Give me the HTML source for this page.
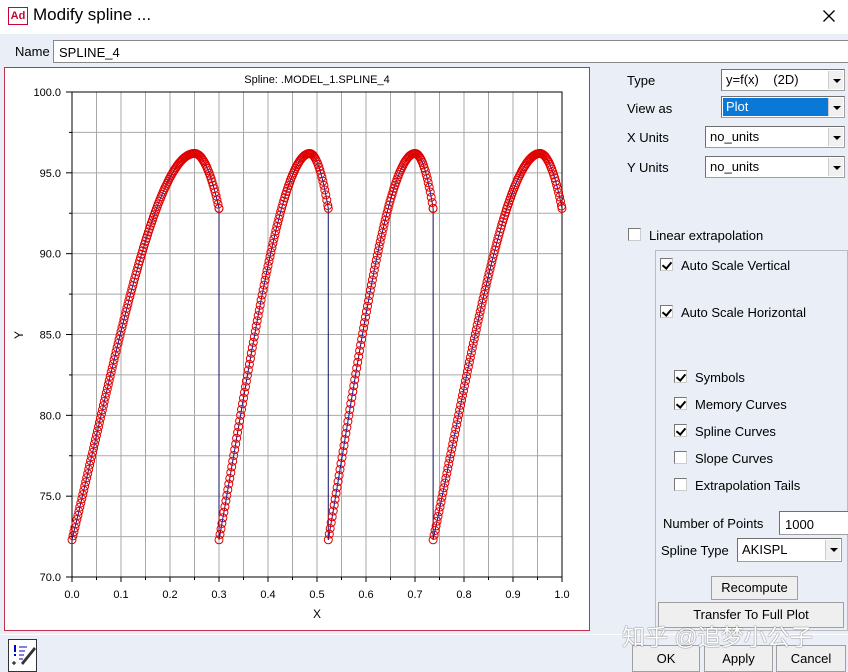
<!DOCTYPE html>
<html><head><meta charset="utf-8"><style>
*{box-sizing:border-box}
body{margin:0;width:848px;height:672px;background:#eaeff7;font-family:"Liberation Sans",Arial,sans-serif;font-size:13px;color:#000;position:relative;overflow:hidden}
.a{position:absolute}
.sel{position:absolute;background:#fff;border:1px solid #a0a0a0;border-top-color:#707070;border-left-color:#707070;font-size:13px;padding:2px 4px}
.sel .ar{position:absolute;right:1px;top:1px;bottom:1px;width:15px;background:#f0f0f0;border-left:1px solid #ccc}
.sel .ar:after{content:"";position:absolute;left:4px;top:8px;border-left:4px solid transparent;border-right:4px solid transparent;border-top:4px solid #000}
.cb{position:absolute;width:13px;height:13px;background:#fff;border:1px solid #777;border-right-color:#ccc;border-bottom-color:#ccc}
.cb.k:after{content:"";position:absolute;left:3px;top:1px;width:4px;height:7px;border:solid #000;border-width:0 2px 2px 0;transform:rotate(40deg)}
.btn{position:absolute;background:#efefef;border:1px solid #a0a0a0;text-align:center;font-size:13px}
</style></head><body>
<div class="a" style="left:0;top:0;width:848px;height:34px;background:#fff"></div>
<div class="a" style="left:8px;top:7px;width:20px;height:18px;border:1px solid #c03;color:#c03;font-weight:bold;font-size:11px;line-height:16px;text-align:center">Ad</div>
<div class="a" style="left:33px;top:5px;font-size:17px">Modify spline ...</div>
<svg class="a" style="left:823px;top:10px" width="12" height="12"><path d="M0.5 0.5L11.5 11.5M11.5 0.5L0.5 11.5" stroke="#000" stroke-width="1.3"/></svg>
<div class="a" style="left:15px;top:44px;font-size:13px">Name</div>
<div class="a" style="left:53px;top:40px;width:795px;height:23px;background:#fff;border:1px solid #888;border-right:none;padding:4px 5px;font-size:13px">SPLINE_4</div>
<div class="a" style="left:4px;top:67px;width:586px;height:564px;background:#fff;border:1px solid #c03050"></div>
<svg class="a" style="left:0;top:0" width="600" height="640" id="pl"></svg>
<div class="a" style="left:0;top:634px;width:848px;height:1px;background:#fff"></div>
<svg class="a" style="left:8px;top:639px" width="30" height="33"><rect x="0.5" y="0.5" width="28" height="32" fill="#fff" stroke="#333"/><rect x="6" y="6" width="2" height="7" fill="#00c"/><rect x="6" y="15" width="2" height="2" fill="#00c"/><path d="M11 8h8M11 12h6M11 16h5M11 20h4" stroke="#00c"/><path d="M13 24L26 8L28 10L15 26Z" fill="#333"/><path d="M4 24h4M6 22v4" stroke="#000"/></svg>

<div class="a" style="left:627px;top:73px">Type</div>
<div class="sel" style="left:721px;top:69px;width:124px;height:22px">y=f(x)&nbsp;&nbsp;&nbsp;&nbsp;(2D)<span class="ar"></span></div>
<div class="a" style="left:627px;top:101px">View as</div>
<div class="sel" style="left:721px;top:96px;width:124px;height:22px;background:#fff;padding:1px"><div style="background:#0a78d7;color:#fff;height:18px;width:105px;padding:1px 3px">Plot</div><span class="ar"></span></div>
<div class="a" style="left:627px;top:130px">X Units</div>
<div class="sel" style="left:705px;top:126px;width:140px;height:22px">no_units<span class="ar"></span></div>
<div class="a" style="left:627px;top:160px">Y Units</div>
<div class="sel" style="left:705px;top:156px;width:140px;height:22px">no_units<span class="ar"></span></div>
<div class="cb" style="left:628px;top:228px"></div><div class="a" style="left:649px;top:228px">Linear extrapolation</div>
<div class="a" style="left:655px;top:250px;width:193px;height:381px;border:1px solid #b8bcc4"></div>
<div class="cb k" style="left:660px;top:258px"></div><div class="a" style="left:681px;top:258px">Auto Scale Vertical</div>
<div class="cb k" style="left:660px;top:305px"></div><div class="a" style="left:681px;top:305px">Auto Scale Horizontal</div>
<div class="cb k" style="left:674px;top:370px"></div><div class="a" style="left:695px;top:370px">Symbols</div>
<div class="cb k" style="left:674px;top:397px"></div><div class="a" style="left:695px;top:397px">Memory Curves</div>
<div class="cb k" style="left:674px;top:424px"></div><div class="a" style="left:695px;top:424px">Spline Curves</div>
<div class="cb" style="left:674px;top:451px"></div><div class="a" style="left:695px;top:451px">Slope Curves</div>
<div class="cb" style="left:674px;top:478px"></div><div class="a" style="left:695px;top:478px">Extrapolation Tails</div>
<div class="a" style="left:663px;top:516px">Number of Points</div>
<div class="sel" style="left:779px;top:511px;width:69px;height:24px;padding:5px 5px;border-right:none">1000</div>
<div class="a" style="left:661px;top:543px">Spline Type</div>
<div class="sel" style="left:737px;top:538px;width:105px;height:24px;padding:3px 4px">AKISPL<span class="ar"></span></div>
<div class="btn" style="left:711px;top:576px;width:87px;height:24px;line-height:22px">Recompute</div>
<div class="btn" style="left:658px;top:602px;width:186px;height:26px;line-height:24px">Transfer To Full Plot</div>
<div class="btn" style="left:632px;top:645px;width:68px;height:27px;line-height:25px">OK</div>
<div class="btn" style="left:704px;top:645px;width:69px;height:27px;line-height:25px">Apply</div>
<div class="btn" style="left:776px;top:645px;width:70px;height:27px;line-height:25px">Cancel</div>
<div class="a" style="left:622px;top:618px;font-size:23px;color:#fff;font-family:'Liberation Sans','Noto Sans CJK SC',sans-serif;text-shadow:0 0 1px #666,0 0 1px #666">知乎 @追梦小公子</div>
<script>
var s='',X0=72,X1=562,Y0=577,Y1=92;
function px(x){return X0+(X1-X0)*x}
function py(y){return Y0-(y-70)/30*(Y0-Y1)}
for(var i=1;i<20;i++){var x=px(i*0.05);s+='<line x1="'+x+'" y1="92" x2="'+x+'" y2="577" stroke="#a8a8a8"/>';}
for(var i=1;i<12;i++){var y=Y1+i*(Y0-Y1)/12;s+='<line x1="72" y1="'+y+'" x2="562" y2="'+y+'" stroke="#a8a8a8"/>';}
s+='<rect x="72" y="92" width="490" height="485" fill="none" stroke="#000"/>';
for(var i=0;i<=10;i++){var x=px(i/10);s+='<line x1="'+x+'" y1="577" x2="'+x+'" y2="582" stroke="#000"/><text x="'+x+'" y="598" font-size="11" text-anchor="middle">'+(i/10).toFixed(1)+'</text>';
if(i<10){var x2=px(i/10+0.05);s+='<line x1="'+x2+'" y1="577" x2="'+x2+'" y2="580" stroke="#000"/>';}}
for(var i=0;i<=6;i++){var v=70+i*5,y=py(v);s+='<line x1="66" y1="'+y+'" x2="72" y2="'+y+'" stroke="#000"/><text x="61" y="'+(y+4)+'" font-size="11" text-anchor="end">'+v.toFixed(1)+'</text>';
if(i<6){var y2=py(v+2.5);s+='<line x1="69" y1="'+y2+'" x2="72" y2="'+y2+'" stroke="#000"/>';}}
s+='<text x="317" y="83" font-size="11" text-anchor="middle">Spline: .MODEL_1.SPLINE_4</text>';
s+='<text x="317" y="618" font-size="12" text-anchor="middle">X</text>';
s+='<text x="23" y="335" font-size="12" text-anchor="middle" transform="rotate(-90 23 335)">Y</text>';
var segs=[[0,0.25,0.3],[0.3,0.485,0.523],[0.523,0.7,0.737],[0.737,0.955,1.0]];
var lo=72.3,hi=96.2,end=92.8,circ='',line='',vl='';
segs.forEach(function(g){var a=g[0],p=g[1],b=g[2];var pts=[];
for(var x=a;x<=b+1e-9;x+=0.002){var y;if(x<=p){var t=(x-a)/(p-a);var f=(t*t*t-2*t*t+t)*1.3+(-2*t*t*t+3*t*t);y=lo+(hi-lo)*f;}else{var u=(x-p)/(b-p);y=hi-(hi-end)*u*u;}pts.push([px(x),py(y)]);}
pts.push([px(b),py(end)]);
line+='<polyline fill="none" stroke="#1010a0" points="'+pts.map(function(q){return q[0].toFixed(1)+','+q[1].toFixed(1)}).join(' ')+'"/>';
pts.forEach(function(q){circ+='<circle cx="'+q[0].toFixed(1)+'" cy="'+q[1].toFixed(1)+'" r="4" fill="none" stroke="#e00000"/>';});
if(b<1)vl+='<line x1="'+px(b)+'" y1="'+py(end)+'" x2="'+px(b)+'" y2="'+py(lo)+'" stroke="#101060"/>';});
s+=vl+line+circ;
document.getElementById('pl').innerHTML=s;
</script>
</body></html>
